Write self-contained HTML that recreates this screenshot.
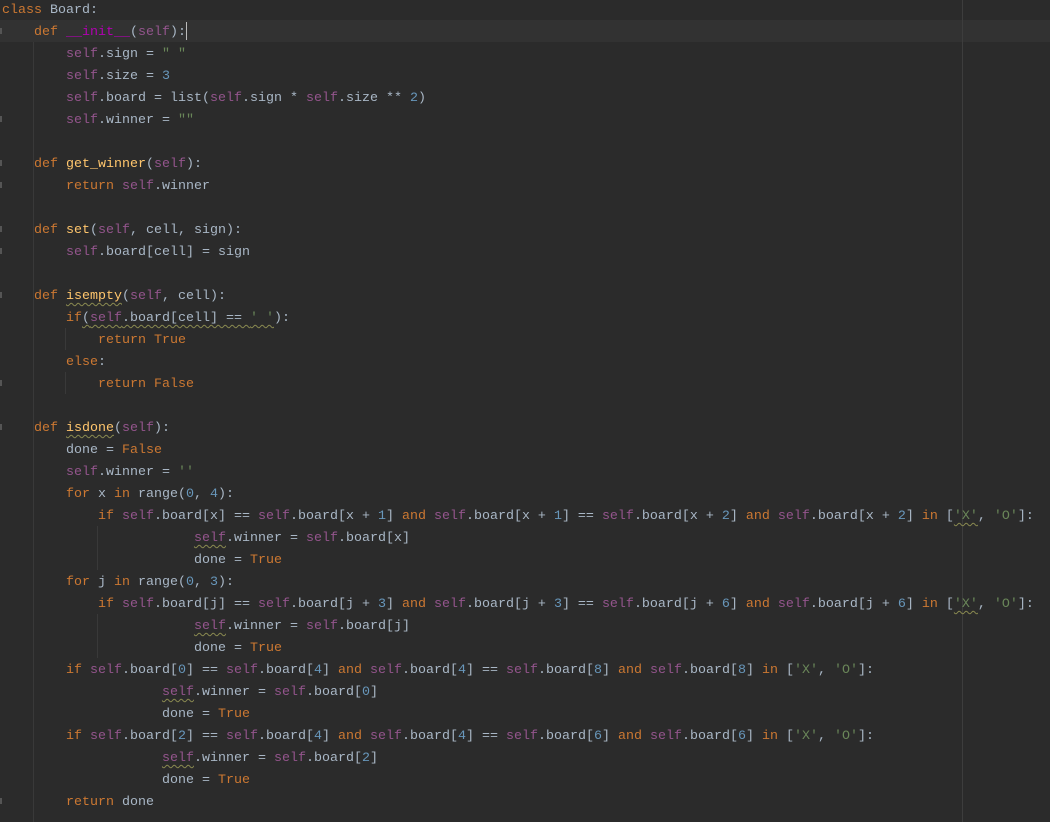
<!DOCTYPE html>
<html><head><meta charset="utf-8"><style>
html,body{margin:0;padding:0;background:#2b2b2b;width:1050px;height:822px;overflow:hidden;position:relative}
pre{position:absolute;left:2px;top:0px;margin:0;font-family:"Liberation Mono",monospace;font-size:13.33px;line-height:22px;color:#a9b7c6;white-space:pre}
.k{color:#cc7832}.s{color:#94558d}.n{color:#6897bb}.t{color:#6a8759}.f{color:#ffc66d}.m{color:#b200b2}
.w{text-decoration:underline wavy #8a8a50;text-decoration-thickness:1px;text-underline-offset:3px}
.cur{position:absolute;left:0;top:20px;width:1050px;height:22px;background:#323232}
.margin{position:absolute;left:962px;top:0;width:1px;height:822px;background:#3d3d3d}
.caret{position:absolute;left:186px;top:22px;width:1px;height:18px;background:#bbb}
.g{position:absolute;width:1px;background:#393939}
.gm{position:absolute;left:0;width:2px;height:6px;background:#555}
</style></head><body>
<div class="cur"></div>
<div class="margin"></div>
<div class="g" style="left:33px;top:42px;height:780px"></div>
<div class="g" style="left:65px;top:328px;height:22px"></div>
<div class="g" style="left:65px;top:372px;height:22px"></div>
<div class="g" style="left:97px;top:526px;height:44px"></div>
<div class="g" style="left:97px;top:614px;height:44px"></div>
<div class="gm" style="top:28px"></div>
<div class="gm" style="top:116px"></div>
<div class="gm" style="top:160px"></div>
<div class="gm" style="top:182px"></div>
<div class="gm" style="top:226px"></div>
<div class="gm" style="top:248px"></div>
<div class="gm" style="top:292px"></div>
<div class="gm" style="top:380px"></div>
<div class="gm" style="top:424px"></div>
<div class="gm" style="top:798px"></div>
<div class="caret"></div>
<pre><span class="k">class</span> Board:
    <span class="k">def</span> <span class="m">__init__</span>(<span class="s">self</span>):
        <span class="s">self</span>.sign = <span class="t">" "</span>
        <span class="s">self</span>.size = <span class="n">3</span>
        <span class="s">self</span>.board = list(<span class="s">self</span>.sign * <span class="s">self</span>.size ** <span class="n">2</span>)
        <span class="s">self</span>.winner = <span class="t">""</span>

    <span class="k">def</span> <span class="f">get_winner</span>(<span class="s">self</span>):
        <span class="k">return</span> <span class="s">self</span>.winner

    <span class="k">def</span> <span class="f">set</span>(<span class="s">self</span>, cell, sign):
        <span class="s">self</span>.board[cell] = sign

    <span class="k">def</span> <span class="f w">isempty</span>(<span class="s">self</span>, cell):
        <span class="k">if</span><span class="w">(<span class="s">self</span>.board[cell] == <span class="t">' '</span></span>):
            <span class="k">return True</span>
        <span class="k">else</span>:
            <span class="k">return False</span>

    <span class="k">def</span> <span class="f w">isdone</span>(<span class="s">self</span>):
        done = <span class="k">False</span>
        <span class="s">self</span>.winner = <span class="t">''</span>
        <span class="k">for</span> x <span class="k">in</span> range(<span class="n">0</span>, <span class="n">4</span>):
            <span class="k">if</span> <span class="s">self</span>.board[x] == <span class="s">self</span>.board[x + <span class="n">1</span>] <span class="k">and</span> <span class="s">self</span>.board[x + <span class="n">1</span>] == <span class="s">self</span>.board[x + <span class="n">2</span>] <span class="k">and</span> <span class="s">self</span>.board[x + <span class="n">2</span>] <span class="k">in</span> [<span class="t w">'X'</span>, <span class="t">'O'</span>]:
                        <span class="s w">self</span>.winner = <span class="s">self</span>.board[x]
                        done = <span class="k">True</span>
        <span class="k">for</span> j <span class="k">in</span> range(<span class="n">0</span>, <span class="n">3</span>):
            <span class="k">if</span> <span class="s">self</span>.board[j] == <span class="s">self</span>.board[j + <span class="n">3</span>] <span class="k">and</span> <span class="s">self</span>.board[j + <span class="n">3</span>] == <span class="s">self</span>.board[j + <span class="n">6</span>] <span class="k">and</span> <span class="s">self</span>.board[j + <span class="n">6</span>] <span class="k">in</span> [<span class="t w">'X'</span>, <span class="t">'O'</span>]:
                        <span class="s w">self</span>.winner = <span class="s">self</span>.board[j]
                        done = <span class="k">True</span>
        <span class="k">if</span> <span class="s">self</span>.board[<span class="n">0</span>] == <span class="s">self</span>.board[<span class="n">4</span>] <span class="k">and</span> <span class="s">self</span>.board[<span class="n">4</span>] == <span class="s">self</span>.board[<span class="n">8</span>] <span class="k">and</span> <span class="s">self</span>.board[<span class="n">8</span>] <span class="k">in</span> [<span class="t">'X'</span>, <span class="t">'O'</span>]:
                    <span class="s w">self</span>.winner = <span class="s">self</span>.board[<span class="n">0</span>]
                    done = <span class="k">True</span>
        <span class="k">if</span> <span class="s">self</span>.board[<span class="n">2</span>] == <span class="s">self</span>.board[<span class="n">4</span>] <span class="k">and</span> <span class="s">self</span>.board[<span class="n">4</span>] == <span class="s">self</span>.board[<span class="n">6</span>] <span class="k">and</span> <span class="s">self</span>.board[<span class="n">6</span>] <span class="k">in</span> [<span class="t">'X'</span>, <span class="t">'O'</span>]:
                    <span class="s w">self</span>.winner = <span class="s">self</span>.board[<span class="n">2</span>]
                    done = <span class="k">True</span>
        <span class="k">return</span> done
</pre>
</body></html>
